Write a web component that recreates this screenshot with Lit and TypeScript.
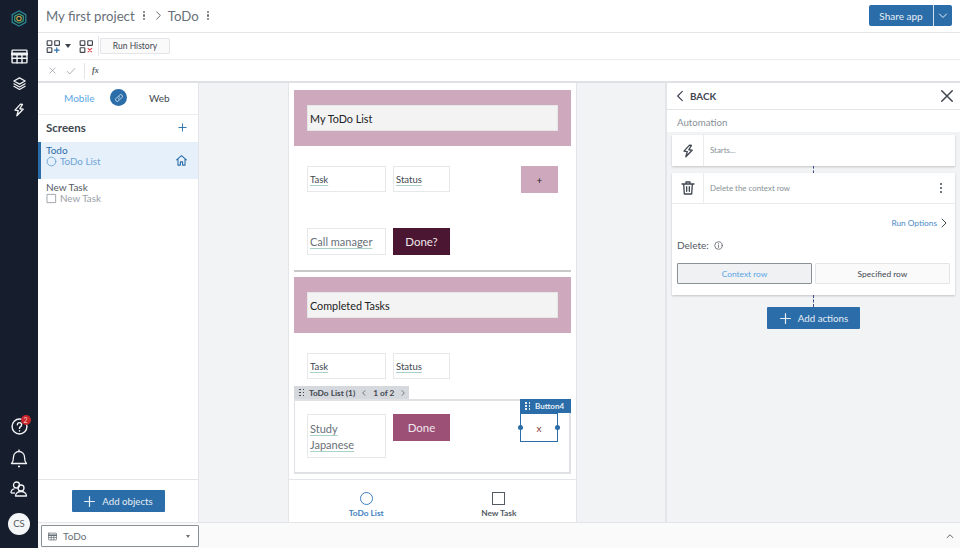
import { LitElement, html, css, svg } from "lit";
import { customElement } from "lit/decorators.js";

const ic = (body: unknown, size = 16, vb = 24, cls = "") => html`<svg class=${cls} width=${size} height=${size} viewBox="0 0 ${vb} ${vb}" fill="none" stroke="currentColor" stroke-width="2" stroke-linecap="round" stroke-linejoin="round">${body}</svg>`;

const bolt = svg`<path d="M13 3 6 13h5l-1 8 8-11h-5l3-7z" transform="rotate(8 12 12)"/>`;
const dots = html`<span class="grip"><i></i><i></i><i></i><i></i><i></i><i></i></span>`;
const vdots = html`<span class="vdots"><i></i><i></i><i></i></span>`;
const tiles = (accent: unknown) => svg`<rect x="2" y="3" width="8" height="8" rx="1"/><rect x="15" y="3" width="8" height="8" rx="1"/><rect x="2" y="15" width="8" height="8" rx="1"/>${accent}`;

@customElement("app-root")
export class AppRoot extends LitElement {
  static styles = css`
    :host { display: flex; width: 960px; height: 548px; overflow: hidden; font-family: "Lato", "Noto Sans", sans-serif; color: #414750; background: #fff; }
    * { box-sizing: border-box; }
    .rail { width: 38px; flex: none; background: #161e2d; color: #f2f3f5; display: flex; flex-direction: column; align-items: center; padding: 10px 0 13px; }
    .logo { margin-bottom: 21px; display: block; }
    .rail .nav { display: flex; flex-direction: column; align-items: center; gap: 11px; }
    .spacer { flex: 1; }
    .help { position: relative; height: 18px; margin-bottom: 12px; }
    .badge { position: absolute; top: -3px; left: 10px; width: 10px; height: 10px; border-radius: 50%; background: #c7262a; color: #f3c7c7; font-size: 7px; line-height: 10px; text-align: center; }
    .bell { margin-bottom: 12px; display: block; }
    .people { margin-bottom: 15px; display: block; }
    .avatar { width: 22px; height: 22px; border-radius: 50%; background: #f5f6f7; color: #545b64; font-size: 9.5px; line-height: 22px; text-align: center; }

    .main { flex: 1; min-width: 0; display: flex; flex-direction: column; }
    .head { height: 33px; flex: none; border-bottom: 1px solid #e3e5e9; display: flex; align-items: center; padding: 0 8px 1px 8px; font-size: 13.2px; color: #687078; }
    .head .crumb { margin-right: 8px; }
    .head .vdots { margin-right: 8px; }
    .head .sep { margin-right: 4px; display: block; color: #545b64; }
    .vdots { display: inline-flex; flex-direction: column; gap: 1.6px; }
    .vdots i { width: 2.2px; height: 2.2px; background: #687078; border-radius: 50%; display: block; }
    .share { margin-left: auto; display: flex; height: 21px; background: #2b6da8; color: #e6eef6; font-size: 10px; border-radius: 2px; overflow: hidden; }
    .share span { width: 64px; display: flex; align-items: center; justify-content: center; }
    .share b { width: 19px; display: flex; align-items: center; justify-content: center; border-left: 1px solid #d5e1ee; }

    .tools { height: 27px; flex: none; border-bottom: 1px solid #ebedef; display: flex; align-items: center; padding-left: 8px; }
    .tools .tri { width: 0; height: 0; border: 3.5px solid transparent; border-top: 4px solid #3b4249; border-bottom: 0; margin: 0 8px 0 5px; }
    .tools .div { width: 1px; height: 20px; background: #e3e5e9; margin: 0 1px 0 5px; }
    .runhist { width: 70px; height: 16px; border: 1px solid #e3e5e9; background: #fafafa; font-size: 8.5px; color: #414750; display: flex; align-items: center; justify-content: center; border-radius: 1px; }

    .formula { height: 23px; flex: none; border-bottom: 2px solid #dfe1e4; display: flex; align-items: center; padding-left: 10px; color: #9aa0a6; gap: 9px; }
    .formula .div { width: 1px; height: 16px; background: #e3e5e9; margin-left: -1px; }
    .formula em { font: italic 700 8px "Liberation Serif", serif; color: #545b64; margin-left: -2px; }

    .work { flex: 1; min-height: 0; display: flex; background: #f2f3f5; }
    .left { width: 161px; flex: none; background: #fff; border-right: 1px solid #e3e5e9; display: flex; flex-direction: column; }
    .tabs { height: 32px; flex: none; border-bottom: 1px solid #ebedef; display: grid; grid-template-columns: 46px 16px 1fr; align-items: center; font-size: 10px; padding: 0 0 2px 26px; }
    .tabs .m { color: #5aa5e6; }
    .tabs .link { width: 17px; height: 17px; border-radius: 50%; background: #2b6da8; color: #dfeaf4; display: flex; align-items: center; justify-content: center; }
    .tabs .w { padding-left: 23px; color: #414750; }
    .shead { height: 27px; flex: none; display: flex; align-items: center; justify-content: space-between; padding: 0 10px 2px 8px; font-size: 11.5px; font-weight: 700; color: #414750; }
    .shead svg { color: #2b6da8; }
    .srow { height: 37px; padding: 3px 10px 0 8px; font-size: 10px; line-height: 11px; position: relative; display: flex; justify-content: space-between; }
    .srow.on { background: #e5f0fa; border-left: 3px solid #2b6da8; padding-left: 5px; color: #2b6da8; }
    .srow .sub { display: flex; align-items: center; gap: 3px; color: #9aa0a6; font-size: 9.8px; margin-left: 0; }
    .srow.on .sub { color: #6da3d6; }
    .srow .home { align-self: center; margin-top: -3px; }
    .srow .name { color: #545b64; }
    .srow.on .name { color: #2b6da8; }
    .sbottom { margin-top: auto; height: 43px; border-top: 1px solid #e3e5e9; display: flex; justify-content: center; padding-top: 10px; }
    .primary { background: #2b6da8; color: #e6eef6; border-radius: 1px; width: 93px; height: 22px; display: flex; align-items: center; justify-content: center; gap: 6px; font-size: 9.7px; }

    .canvas { flex: 1; min-width: 0; display: flex; justify-content: center; padding-left: 1px; }
    .phone { width: 289px; background: #fff; border: solid #e3e5e9; border-width: 0 1px; padding: 7px 5px 0; display: flex; flex-direction: column; position: relative; color: #414750; }
    .band { height: 56px; background: #cea9bd; display: flex; align-items: center; padding: 0 13px; flex: none; }
    .title { width: 100%; height: 26px; background: #f3f3f3; border: 1px solid #e6e6e6; display: flex; align-items: center; padding-left: 2px; font-size: 10.8px; color: #222; }
    .grid { display: grid; grid-template-columns: 79px 57px 1fr; column-gap: 7px; padding: 0 13px; flex: none; }
    .cell { border: 1px solid #e6e8ea; background: #fff; height: 26px; display: flex; align-items: center; padding-left: 2px; font-size: 9.5px; color: #414750; }
    .cell u { text-decoration-color: #a9d1c8; text-underline-offset: 2px; }
    .cell.big { height: 27px; font-size: 11px; color: #687078; }
    .cell.tall { height: 44px; align-items: flex-start; padding-top: 6px; font-size: 11px; line-height: 16px; color: #687078; }
    .btn { height: 27px; display: flex; align-items: center; justify-content: center; font-size: 11.5px; color: #f1e6ec; }
    .plus { width: 37px; height: 27px; background: #cea9bd; color: #222; font-size: 10px; justify-self: end; display: flex; align-items: center; justify-content: center; }
    .r1 { margin-top: 20px; }
    .r2 { margin-top: 35px; }
    .rule { height: 2px; background: #c9c9c9; margin: 15px 0 5px; flex: none; }
    .r3 { margin-top: 20px; }

    .listwrap { margin-top: 7px; position: relative; flex: none; }
    .tag { height: 13px; width: 115px; background: #d5d8dc; color: #414750; font-size: 8.3px; font-weight: 700; display: flex; align-items: center; padding-left: 5px; gap: 5px; }
    .grip { display: inline-grid; grid-template-columns: 1.5px 1.5px; gap: 1.5px 2px; }
    .grip i { width: 1.5px; height: 1.5px; background: currentColor; display: block; }
    .list { height: 75px; border: 2px solid #dfe1e4; border-width: 2px 2px 2px 1px; padding-top: 13px; position: relative; }
    .list .grid { padding: 0 12px; }
    .sel { position: absolute; top: 12px; left: 225px; width: 38px; height: 29px; border: 1.5px solid #2b6da8; display: flex; align-items: center; justify-content: center; font-size: 10px; color: #8a3a3a; }
    .h { position: absolute; width: 5px; height: 5px; background: #2b6da8; border-radius: 50%; top: 11px; }
    .h.l { left: -3px; } .h.r { right: -3px; }
    .btag { position: absolute; left: 225px; top: -2px; width: 51px; height: 14px; background: #2b6da8; color: #e6eef6; font-size: 8px; font-weight: 700; display: flex; align-items: center; gap: 5px; padding-left: 5px; }
    .pnav { margin: 5px -5px 0; border-top: 1px solid #e3e5e9; flex: 1; display: grid; grid-template-columns: 1fr 1fr; padding: 0 11px; }
    .pnav div { display: flex; flex-direction: column; align-items: center; padding-top: 12px; font-size: 8.3px; font-weight: 700; color: #545b64; gap: 3px; }
    .pnav .on { color: #3f7fbf; }
    .pnav .circ { width: 13px; height: 13px; border-radius: 50%; border: 1.2px solid #3f7fbf; }
    .pnav .sq { width: 13px; height: 13px; border: 1.2px solid #545b64; }

    .right { width: 295px; flex: none; background: #f2f3f5; border-left: 2px solid #e3e5e9; display: flex; flex-direction: column; }
    .rtop { height: 27px; flex: none; background: #fff; border-bottom: 1px solid #e3e5e9; display: flex; align-items: center; padding: 0 4px 0 6px; font-size: 9.8px; font-weight: 700; color: #414750; }
    .rtop svg:first-child { margin-right: 3px; }
    .rtop span { flex: 1; }
    .auto { height: 22px; flex: none; background: #fff; font-size: 9.7px; color: #879196; padding: 6px 0 0 10px; line-height: 12px; }
    .cards { padding: 3px 5px 0 5px; display: flex; flex-direction: column; align-items: stretch; }
    .card { background: #fff; box-shadow: 0 1px 2px rgba(0,0,0,.2); }
    .crow { height: 31px; display: flex; align-items: center; font-size: 7.9px; color: #879196; }
    .crow .ico { width: 32px; height: 100%; display: flex; align-items: center; justify-content: center; border-right: 1px solid #e9ebed; color: #414750; flex: none; }
    .crow .txt { flex: 1; padding: 0 0 1px 6px; }
    .crow .vdots { margin-right: 13px; }
    .crow .vdots i { background: #414750; }
    .conn { height: 7px; width: 1px; margin: 0 auto; border-left: 1px dashed #3c4a8a; flex: none; }
    .conn.t { height: 12px; }
    .crow.b { border-bottom: 1px solid #e9ebed; }
    .body { padding: 13px 5px 10px 5px; height: 91px; }
    .runop { display: flex; justify-content: flex-end; align-items: center; gap: 1px; font-size: 8.3px; color: #4a8bc9; line-height: 12px; padding-right: 0; }
    .runop svg { color: #414750; }
    .del { display: flex; align-items: center; gap: 5px; font-size: 10px; color: #545b64; margin-top: 10px; line-height: 12px; }
    .del svg { color: #545b64; }
    .seg { display: grid; grid-template-columns: 135px 135px; gap: 3px; margin-top: 12px; }
    .seg div { height: 21px; display: flex; align-items: center; justify-content: center; font-size: 8.4px; border: 1px solid #e3e5e9; background: #fafafa; color: #414750; border-radius: 1px; }
    .seg .on { background: #f0f1f3; border-color: #879196; color: #5aa5e6; }
    .addact { align-self: center; }

    .foot { height: 26px; flex: none; background: #fafafa; border-top: 1px solid #e3e5e9; display: flex; align-items: center; padding: 0 5px 0 3px; position: relative; }
    .sel2 { width: 158px; height: 22px; margin-top: 1px; background: #fff; border: 1px solid #879196; border-radius: 1px; display: flex; align-items: center; padding: 0 8px 0 6px; gap: 6px; font-size: 10px; color: #687078; }
    .sel2 .t { flex: 1; }
    .sel2 .c { width: 0; height: 0; border: 2.5px solid transparent; border-top: 3px solid #687078; border-bottom: 0; }
    .foot svg.up { margin-left: auto; color: #414750; }
  `;

  render() {
    const table = (s: number) => ic(svg`<rect x="1.5" y="3" width="21" height="18" rx="1" stroke-width="2"/><path d="M1.5 8.5h21" stroke-width="4"/><path d="M1.5 14.5h21M8.5 8v13M15.5 8v13"/>`, s);
    const plus = ic(svg`<path d="M12 3v18M3 12h18" stroke-width="2.200"/>`, 13, 24);
    return html`
      <aside class="rail">
        <svg class="logo" width="16" height="17" viewBox="0 0 18 20" fill="none" stroke-width="1.4">
          <path d="M9 1 17 5.5v9L9 19 1 14.500v-9z" stroke="#2a8c9c"/>
          <path d="M9 4.500 14 7.300v5.400L9 15.500 4 12.700V7.300z" stroke="#3fa37a"/>
          <circle cx="9" cy="10" r="2.600" stroke="#c0a04a"/>
        </svg>
        <div class="nav">
          ${table(17)}
          ${ic(svg`<path d="M12 3 21 8l-9 5-9-5z"/><path d="M3 12.500 12 17.500 21 12.500"/><path d="M3 16.500 12 21.500 21 16.500"/>`, 15, 24)}
          ${ic(bolt, 16)}
        </div>
        <div class="spacer"></div>
        <div class="help">
          ${ic(svg`<circle cx="12" cy="12" r="10.500"/><path d="M9 9.500a3 3 0 1 1 4.500 2.700c-1 .6-1.500 1.200-1.500 2.500"/><path d="M12 18v.5"/>`, 17)}
          <span class="badge">2</span>
        </div>
        <svg class="bell" width="18" height="20" viewBox="0 0 18 20" fill="none" stroke="currentColor" stroke-width="1.300" stroke-linejoin="round"><path d="M1.500 15.500c1.500-1.500 2-3 2-6.500a5.500 5.500 0 0 1 11 0c0 3.500.5 5 2 6.500z"/><path d="M9 1.500v2"/><path d="M8 18.500h2"/></svg>
        <svg class="people" width="18" height="18" viewBox="0 0 18 18" fill="none" stroke="currentColor" stroke-width="1.300" stroke-linejoin="round"><circle cx="6.500" cy="5" r="3"/><circle cx="11" cy="8" r="3"/><path d="M1 13c0-2.500 1.500-4 3.500-4.200"/><path d="M1 13h4"/><path d="M5.500 16c0-2.500 2.500-4.500 5.500-4.500s5.500 2 5.500 4.500z"/></svg>
        <div class="avatar">CS</div>
      </aside>
      <div class="main">
        <header class="head">
          <span class="crumb">My first project</span>${vdots}
          ${ic(svg`<path d="M8 4l8 8-8 8"/>`, 11, 24, "sep")}
          <span class="crumb">ToDo</span>${vdots}
          <div class="share"><span>Share app</span><b>${ic(svg`<path d="M5 8l7 7 7-7"/>`, 12)}</b></div>
        </header>
        <div class="tools">
          ${ic(tiles(svg`<path d="M18.500 15v8M14.500 19h8" stroke="#2b6da8"/>`), 14)}
          <span class="tri"></span>
          ${ic(tiles(svg`<path d="M15.500 16l6 6M21.500 16l-6 6" stroke="#d8424f"/>`), 14)}
          <span class="div"></span>
          <div class="runhist">Run History</div>
        </div>
        <div class="formula">
          ${ic(svg`<path d="M5 5l14 14M19 5 5 19"/>`, 9)}
          ${ic(svg`<path d="M3 13l6 6L21 6"/>`, 10)}
          <span class="div"></span><em>fx</em>
        </div>
        <div class="work">
          <section class="left">
            <div class="tabs"><span class="m">Mobile</span><span class="link">${ic(svg`<path d="M10 14a4 4 0 0 0 6 0l3-3a4 4 0 0 0-6-6l-1 1M14 10a4 4 0 0 0-6 0l-3 3a4 4 0 0 0 6 6l1-1"/>`, 10)}</span><span class="w">Web</span></div>
            <div class="shead"><span>Screens</span>${ic(svg`<path d="M12 4v16M4 12h16"/>`, 11, 24)}</div>
            <div class="srow on">
              <div><div class="name">Todo</div><div class="sub">${ic(svg`<circle cx="12" cy="12" r="9.500"/>`, 11)}ToDo List</div></div>
              ${ic(svg`<path d="M3 11 12 3l9 8M5.500 9v11.500h4.500v-6h4v6h4.500V9"/>`, 13, 24, "home")}
            </div>
            <div class="srow">
              <div><div class="name">New Task</div><div class="sub">${ic(svg`<rect x="3" y="3" width="18" height="18"/>`, 11)}New Task</div></div>
            </div>
            <div class="sbottom"><div class="primary">${plus}Add objects</div></div>
          </section>
          <div class="canvas">
            <section class="phone">
              <div class="band"><div class="title">My ToDo List</div></div>
              <div class="grid r1">
                <div class="cell"><u>Task</u></div><div class="cell"><u>Status</u></div><div class="plus">+</div>
              </div>
              <div class="grid r2">
                <div class="cell big"><u>Call manager</u></div><div class="btn" style="background:#4a1631">Done?</div>
              </div>
              <div class="rule"></div>
              <div class="band"><div class="title">Completed Tasks</div></div>
              <div class="grid r3">
                <div class="cell"><u>Task</u></div><div class="cell"><u>Status</u></div>
              </div>
              <div class="listwrap">
                <div class="tag">${dots}<span>ToDo List (1)</span>${ic(svg`<path d="M15 5l-7 7 7 7"/>`, 8)}<span>1 of 2</span>${ic(svg`<path d="M9 5l7 7-7 7"/>`, 8)}</div>
                <div class="list">
                  <div class="grid">
                    <div class="cell tall"><u>Study<br />Japanese</u></div>
                    <div class="btn" style="background:#9c5076">Done</div>
                  </div>
                  <div class="sel">x<i class="h l"></i><i class="h r"></i></div>
                  <div class="btag">${dots}<span>Button4</span></div>
                </div>
              </div>
              <div class="pnav">
                <div class="on"><span class="circ"></span>ToDo List</div>
                <div><span class="sq"></span>New Task</div>
              </div>
            </section>
          </div>
          <section class="right">
            <div class="rtop">${ic(svg`<path d="M16 4l-8 8 8 8"/>`, 14)}<span>BACK</span>${ic(svg`<path d="M5 5l14 14M19 5 5 19"/>`, 18)}</div>
            <div class="auto">Automation</div>
            <div class="cards">
              <div class="card crow"><div class="ico">${ic(bolt, 16)}</div><div class="txt">Starts...</div></div>
              <div class="conn"></div>
              <div class="card">
                <div class="crow b"><div class="ico">${ic(svg`<path d="M3 6h18M9 6V3h6v3M5.500 6l1 15h11l1-15M10 10v7M14 10v7"/>`, 16)}</div><div class="txt">Delete the context row</div>${vdots}</div>
                <div class="body">
                  <div class="runop">Run Options ${ic(svg`<path d="M8 4l8 8-8 8"/>`, 12)}</div>
                  <div class="del">Delete: ${ic(svg`<circle cx="12" cy="12" r="10"/><path d="M12 11v6M12 7v.5"/>`, 9)}</div>
                  <div class="seg"><div class="on">Context row</div><div>Specified row</div></div>
                </div>
              </div>
              <div class="conn t"></div>
              <div class="primary addact">${plus}Add actions</div>
            </div>
          </section>
        </div>
        <footer class="foot">
          <div class="sel2">${table(9)}<span class="t">ToDo</span><span class="c"></span></div>
          ${ic(svg`<path d="M5 16l7-7 7 7"/>`, 10, 24, "up")}
        </footer>
      </div>
    `;
  }
}
